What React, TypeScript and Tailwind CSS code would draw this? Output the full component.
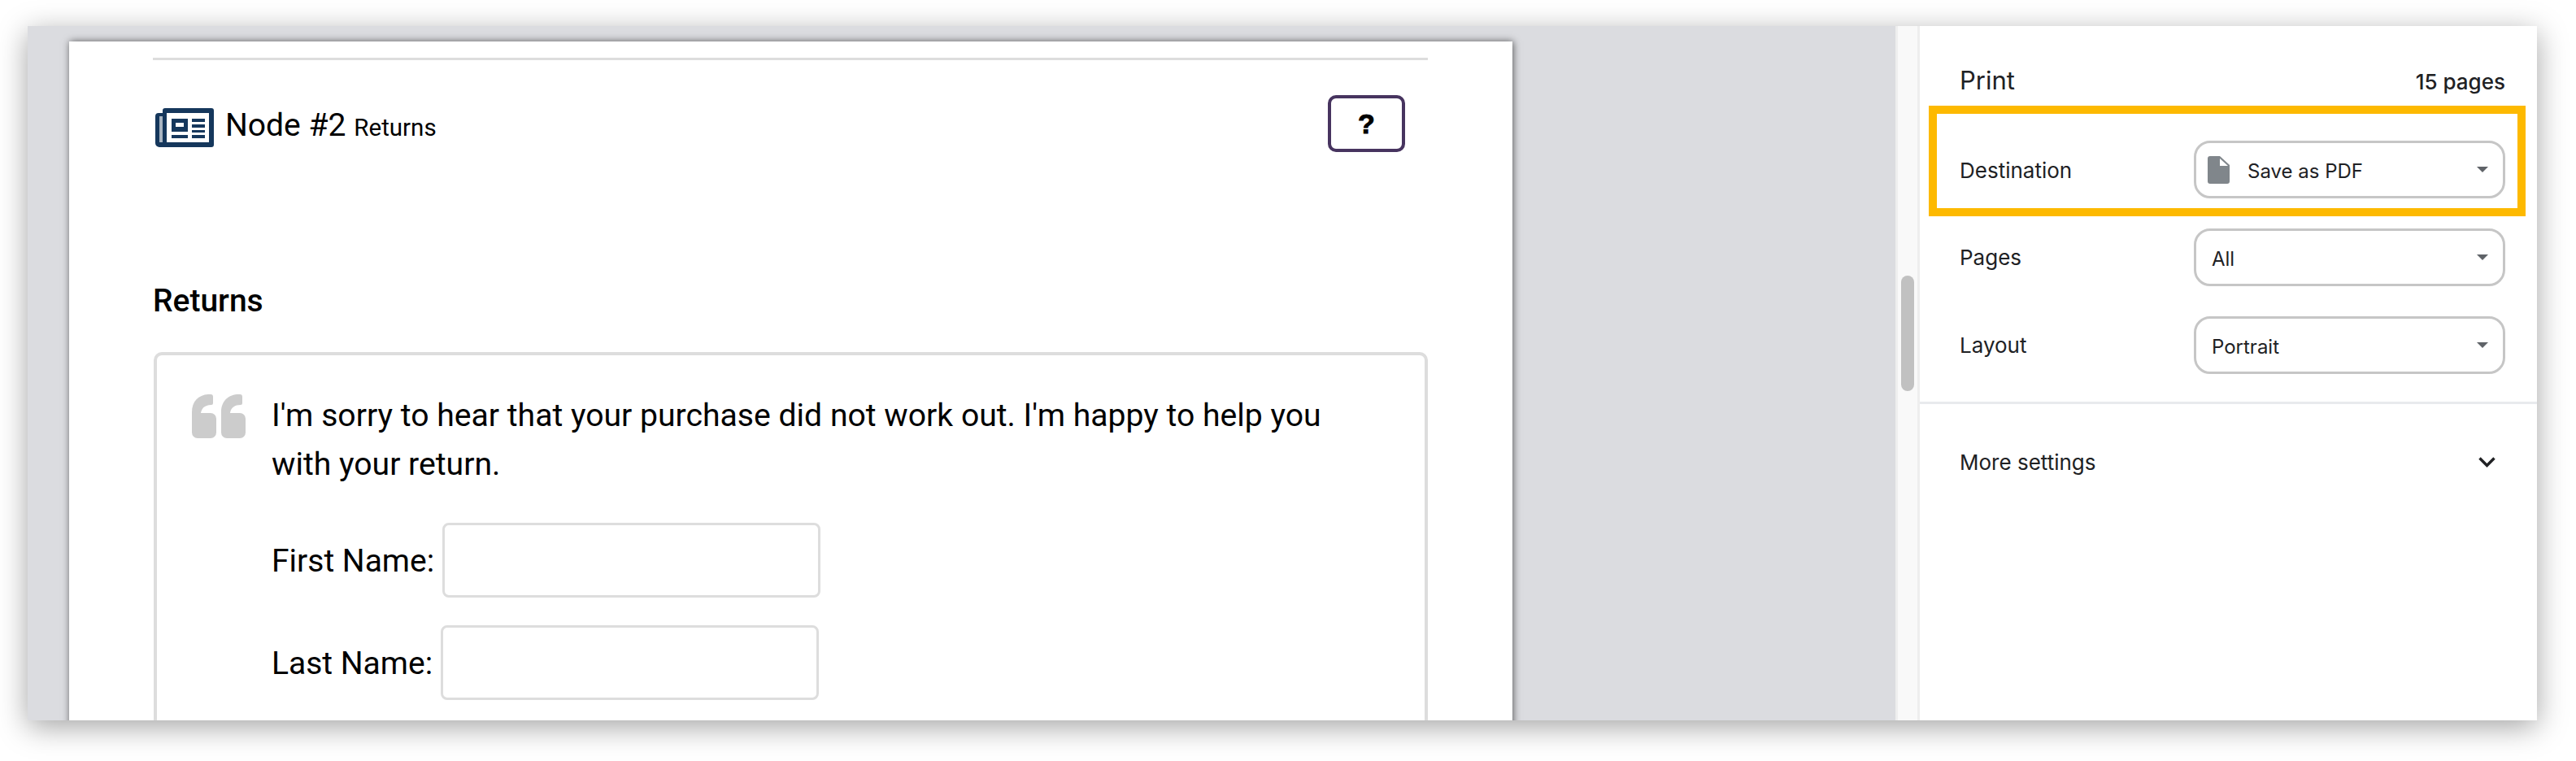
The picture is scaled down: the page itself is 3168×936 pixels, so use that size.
function Newspaper() {
  return (
    <svg width="72" height="48" viewBox="0 0 72 48" className="shrink-0">
      <path d="M4 6h5V3a3 3 0 0 1 3-3h57a3 3 0 0 1 3 3v42a3 3 0 0 1-3 3H5a5 5 0 0 1-5-5V10a4 4 0 0 1 4-4z" fill="#15375c" />
      <rect x="5" y="10" width="4" height="32" fill="#a9b5c2" />
      <rect x="14" y="6" width="52" height="36" fill="#fff" />
      <path d="M20 13h20v16H20zM45 13h16v4H45zM45 20h16v4H45zM45 27h16v3H45zM20 33h20v4H20zM45 33h16v4H45z" fill="#15375c" />
      <rect x="25" y="18" width="10" height="5" fill="#fff" />
    </svg>
  );
}

function Caret() {
  return (
    <svg width="14" height="7" viewBox="0 0 14 7" className="shrink-0">
      <path d="M0 0h14L7 7z" fill="#5f6368" />
    </svg>
  );
}

function QuoteMark() {
  const mark = "M22 0h1a3 3 0 0 1 3 3v8a2 2 0 0 1-2 2c-7 0-12 3-13 10h12a7 7 0 0 1 7 7v17a7 7 0 0 1-7 7H7a7 7 0 0 1-7-7V22C0 8 9 0 22 0z";
  return (
    <svg width="66" height="54" viewBox="0 0 66 54" className="shrink-0">
      <path d={mark} fill="#cccccc" />
      <path d={mark} transform="translate(36 0)" fill="#cccccc" />
    </svg>
  );
}

function SelectBox({ label, icon }: { label: string; icon?: boolean }) {
  return (
    <div className="w-[383px] h-[71px] border-[3px] border-[#c6c6c6] rounded-[20px] bg-white flex items-center pr-[18px] pl-[19px]">
      {icon ? (
        <svg width="27" height="34" viewBox="0 0 27 34" className="mr-[22px] -ml-[5px] shrink-0">
          <path d="M3 0h12l12 11v20a3 3 0 0 1-3 3H3a3 3 0 0 1-3-3V3a3 3 0 0 1 3-3z" fill="#80868b" />
          <path d="M15 3v9h10z" fill="#fff" />
        </svg>
      ) : null}
      <span className="flex-1 text-[24px] text-[#202124] font-['Inter',sans-serif] mt-[5px]">{label}</span>
      <Caret />
    </div>
  );
}

function SettingRow({ name, label }: { name: string; label: string }) {
  return (
    <div className="flex items-center justify-between pl-[49px] pr-[39px]">
      <span className="text-[26px] text-[#202124]">{name}</span>
      <SelectBox label={label} />
    </div>
  );
}

function NameField({ label }: { label: string }) {
  return (
    <div className="flex items-center gap-[10px]">
      <span className="text-[39px] leading-none text-black mt-[3px]">{label}</span>
      <div className="w-[465px] h-[92px] border-[3px] border-[#dddddd] rounded-[8px] bg-white" />
    </div>
  );
}

export default function App() {
  return (
    <div className="w-[3168px] h-[936px] bg-white pt-[32px] pl-[34px] overflow-hidden font-['Roboto',sans-serif]">
      <div className="w-[3086px] h-[854px] flex overflow-hidden shadow-[0_8px_34px_rgba(0,0,0,0.36)]">
        <div className="w-[2297px] bg-[#dbdce0] pt-[19px] pl-[51px] overflow-hidden">
          <div className="w-[1775px] h-[900px] bg-white shadow-[1px_0_9px_rgba(0,0,0,0.6)] pt-[20px] px-[103px]">
            <div className="w-[1568px] h-[3px] bg-[#dddddd]" />
            <div className="flex items-start justify-between mt-[43px] pl-[3px] pr-[29px]">
              <div className="flex items-center gap-[14px] mt-[16px]">
                <Newspaper />
                <div className="flex items-baseline gap-[10px] text-black -mt-[5px]">
                  <span className="text-[39px] leading-none">Node #2</span>
                  <span className="text-[29.5px] leading-none">Returns</span>
                </div>
              </div>
              <div className="w-[95px] h-[70px] border-[4px] border-[#47345f] rounded-[10px] flex items-center justify-center text-[34px] font-bold text-black font-['Liberation_Sans',sans-serif] [-webkit-text-stroke:1px_black]">
                ?
              </div>
            </div>
            <div className="mt-[164px] text-[39px] leading-none font-medium text-black">Returns</div>
            <div className="w-[1567px] ml-[1px] h-[600px] mt-[43px] border-[4px] border-[#dddddd] rounded-[10px] flex pl-[43px] pt-[48px] gap-[32px]">
              <QuoteMark />
              <div className="flex-1 -mt-[4px]">
                <p className="w-[1340px] text-[39.15px] leading-[60px] text-black">
                  I'm sorry to hear that your purchase did not work out. I'm happy to help you with your return.
                </p>
                <div className="mt-[42px] flex flex-col gap-[34px]">
                  <NameField label="First Name:" />
                  <NameField label="Last Name:" />
                </div>
              </div>
            </div>
          </div>
        </div>
        <div className="w-[30px] bg-[#f9f9f9] border-l-[3px] border-r-[3px] border-[#eeeeee] pl-[4px] pt-[307px]">
          <div className="w-[16px] h-[142px] rounded-full bg-[#c1c1c1]" />
        </div>
        <div className="flex-1 bg-white font-['Inter',sans-serif]">
          <div className="flex items-baseline justify-between pl-[49px] pr-[39px] pt-[51px] h-[98px]">
            <span className="text-[31px] leading-none text-[#202124]">Print</span>
            <span className="text-[26px] leading-none text-[#202124] font-medium">15 pages</span>
          </div>
          <div className="ml-[11px] mr-[14px] h-[136px] border-[10px] border-[#fdb900]">
            <div className="pt-[33px] flex items-center justify-between pl-[28px] pr-[15px]">
              <span className="text-[26px] text-[#202124] mt-[2px]">Destination</span>
              <SelectBox label="Save as PDF" icon />
            </div>
          </div>
          <div className="mt-[15px] flex flex-col gap-[37px]">
            <SettingRow name="Pages" label="All" />
            <SettingRow name="Layout" label="Portrait" />
          </div>
          <div className="mt-[34px] h-[3px] bg-[#e8eaed]" />
          <div className="flex items-center justify-between pl-[49px] pr-[51px] mt-[52px]">
            <span className="text-[26px] text-[#202124]">More settings</span>
            <svg width="21" height="13" viewBox="0 0 21 13" fill="none">
              <path d="M1.5 1.5l9 9 9-9" stroke="#202124" strokeWidth="3.4" />
            </svg>
          </div>
        </div>
      </div>
    </div>
  );
}
